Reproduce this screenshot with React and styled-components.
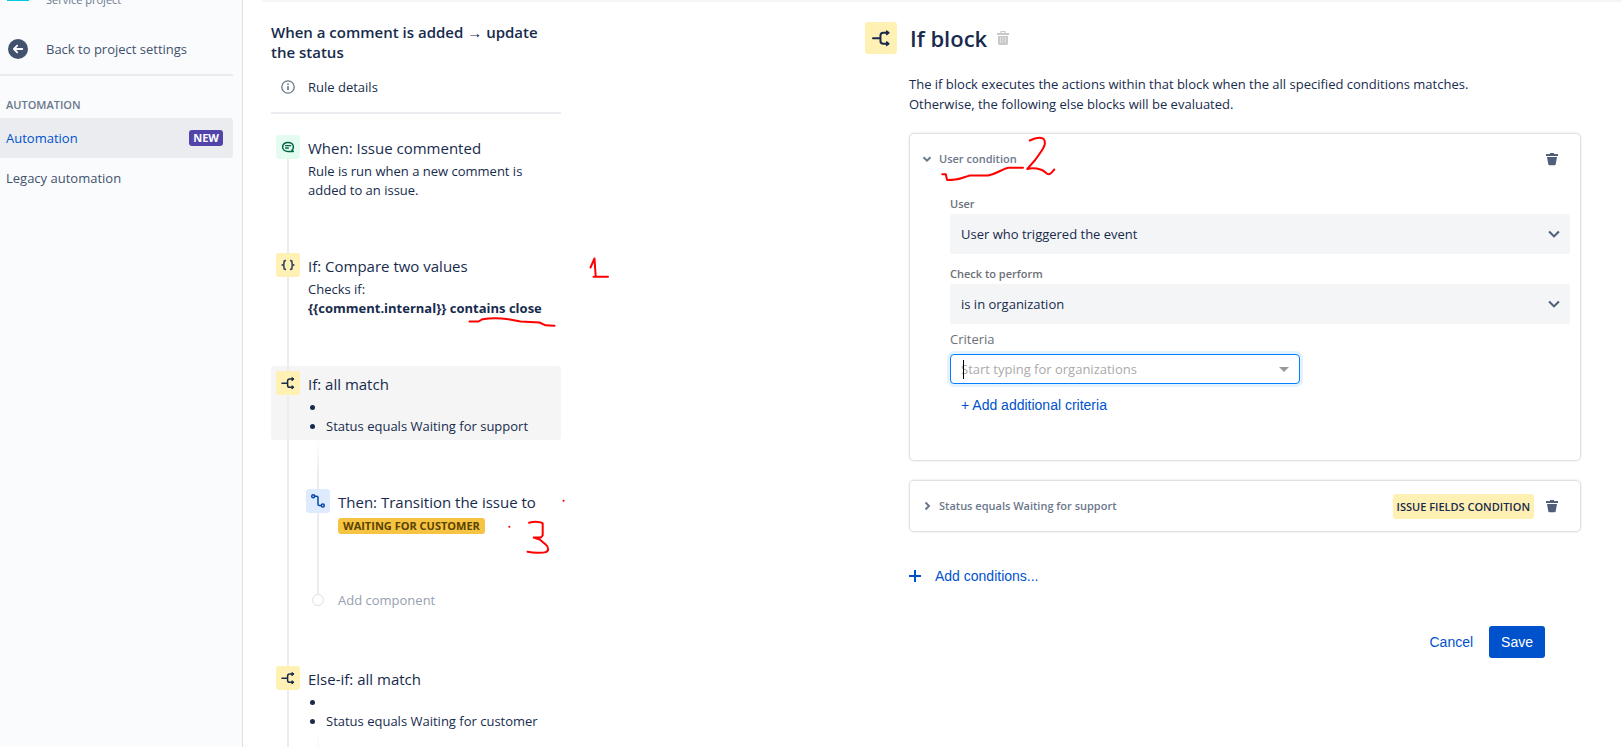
import styled, { createGlobalStyle } from 'styled-components';

const GlobalStyle = createGlobalStyle`
  *, *::before, *::after {
    box-sizing: border-box;
  }
  body {
    margin: 0;
    color: #172b4d;
    background: #fff;
    font-family: "Open Sans", "Noto Sans", sans-serif;
    font-size: 13px;
    line-height: 20px;
  }
  h1, h2, h3, p, ul {
    margin: 0;
    padding: 0;
  }
  button, input, select {
    font: inherit;
    color: inherit;
  }
`;

const Page = styled.div`
  position: relative;
  display: flex;
  height: 100vh;
  overflow: hidden;
`;

/* ---------- sidebar ---------- */

const Sidebar = styled.nav`
  flex: none;
  width: 243px;
  padding-right: 9px;
  background: #fafbfc;
  border-right: 1px solid #dfe1e6;
  color: #42526e;
`;

const ProjectHeader = styled.div`
  display: flex;
  align-items: flex-end;
  gap: 17px;
  height: 10px;
  margin-top: -2px;
  padding-left: 7px;
  font-size: 11px;
  line-height: 16px;
  color: #6b778c;
`;

const ProjectAvatar = styled.span`
  align-self: flex-start;
  width: 22px;
  height: 3px;
  background: #00c7e5;
`;

const BackLink = styled.a`
  display: flex;
  align-items: center;
  gap: 18px;
  height: 68px;
  padding: 16px 0 0 8px;
  border-bottom: 2px solid #ebecf0;
  color: inherit;
  text-decoration: none;
`;

const NavHeading = styled.h3`
  padding: 20px 6px 4px;
  font-size: 11px;
  line-height: 18px;
  font-weight: 600;
  color: #6b778c;
`;

const NavItem = styled.a`
  display: flex;
  align-items: center;
  justify-content: space-between;
  height: 40px;
  padding: 0 10px 0 6px;
  border-radius: 0 3px 3px 0;
  background: ${(props) => (props.$active ? '#ebecf0' : 'transparent')};
  color: ${(props) => (props.$active ? '#0052cc' : 'inherit')};
  text-decoration: none;
`;

const NewBadge = styled.span`
  padding: 0 4px;
  border-radius: 3px;
  background: #5243aa;
  color: #fff;
  font-size: 11px;
  line-height: 16px;
  font-weight: 700;
`;

/* ---------- main ---------- */

const Main = styled.main`
  flex: 1;
  min-width: 0;
  padding-left: 19px;
`;

const TopStrip = styled.div`
  height: 2px;
  border-radius: 0 0 0 3px;
  background: #f4f5f7;
`;

const Editor = styled.div`
  display: grid;
  grid-template-columns: 290px minmax(0, 716px);
  justify-content: space-between;
  gap: 40px;
  padding: 20px 40px 0 9px;
`;

const RuleTitle = styled.h2`
  font-size: 15px;
  line-height: 20px;
  font-weight: 600;
`;

const RuleDetails = styled.a`
  display: flex;
  align-items: center;
  gap: 12px;
  height: 52px;
  padding: 0 9px;
  border-bottom: 2px solid #ebecf0;
  color: inherit;
  text-decoration: none;
`;

const Timeline = styled.div`
  position: relative;
  margin-top: 16px;

  &::before {
    content: "";
    position: absolute;
    top: 29px;
    bottom: 0;
    left: 16px;
    width: 2px;
    background: #ebecf0;
  }
`;

const Step = styled.section`
  display: flex;
  gap: 8px;
  margin-bottom: ${(props) => (props.$open ? 0 : '44px')};
  padding: 5px 5px 4px;
  border-radius: 3px;
  /* translucent, the timeline shows through the selected step */
  background: ${(props) => (props.$selected ? 'rgba(9, 9, 9, 0.04)' : 'transparent')};
`;

const Tile = styled.span`
  position: relative;
  flex: none;
  display: flex;
  align-items: center;
  justify-content: center;
  width: ${(props) => props.$size || 24}px;
  height: ${(props) => props.$size || 24}px;
  border-radius: 3px;
  background: ${(props) => props.$bg};
  color: ${(props) => props.$color || '#172b4d'};
`;

const StepBody = styled.div`
  min-width: 0;
  padding-top: 1px;
  line-height: 19px;
`;

const StepTitle = styled.h3`
  margin-bottom: 2px;
  font-size: 15px;
  line-height: 24px;
  font-weight: 400;
  white-space: nowrap;
`;

const Bullets = styled.ul`
  padding-left: 18px;

  li {
    min-height: 19px;
  }
`;

const Branch = styled.div`
  position: relative;
  min-height: 60px;
  margin-left: 30px;
  padding-top: 44px;

  &::before {
    content: "";
    position: absolute;
    top: 0;
    bottom: 23px;
    left: 16px;
    width: 2px;
    background: linear-gradient(#fff, #ebecf0 32px);
  }

  &:empty::before {
    bottom: 0;
  }
`;

const StatusLozenge = styled.span`
  display: inline-block;
  padding: 0 5px;
  border-radius: 3px;
  background: #f6c342;
  color: #594300;
  font-size: 11px;
  line-height: 16px;
  font-weight: 700;
`;

const AddComponent = styled.button`
  display: flex;
  align-items: center;
  gap: 14px;
  height: 34px;
  margin-bottom: 44px;
  padding: 0 11px;
  border: 0;
  background: none;
  color: #97a0af;
`;

const AddDot = styled.span`
  position: relative;
  width: 12px;
  height: 12px;
  border: 1px solid #dfe1e6;
  border-radius: 50%;
  background: #fff;
`;

/* ---------- block settings ---------- */

const BlockHeader = styled.header`
  display: flex;
  align-items: center;
  gap: 10px;
`;

const BlockTitle = styled.h1`
  padding-left: 3px;
  font-size: 22px;
  line-height: 32px;
  font-weight: 600;
`;

const IconButton = styled.button`
  display: flex;
  padding: 0;
  border: 0;
  background: none;
  color: ${(props) => props.$color || '#505f79'};
`;

const BlockContent = styled.div`
  padding: 20px 0 0 44px;
`;

const Description = styled.p`
  max-width: 600px;
`;

const Card = styled.section`
  margin-top: 19px;
  padding: 0 10px;
  border: 1px solid #dfe1e6;
  border-radius: 5px;
  box-shadow: 0 0 2px rgba(0, 0, 0, 0.15);
`;

const CardHeader = styled.div`
  display: flex;
  align-items: center;
  gap: 12px;
  height: 50px;
  padding: 0 12px 0 2px;
`;

const CardToggle = styled.button`
  display: flex;
  align-items: center;
  gap: 7px;
  margin-right: auto;
  padding: 0;
  border: 0;
  background: none;
  color: #6b778c;
  font-size: 11px;
  font-weight: 600;
`;

const FieldsBadge = styled.span`
  padding: 0 4px;
  border-radius: 3px;
  background: #fff0b3;
  font-size: 11px;
  line-height: 25px;
  font-weight: 600;
`;

const Fields = styled.div`
  padding: 10px 0 45px 30px;
`;

const Label = styled.label`
  display: block;
  font-size: ${(props) => (props.$large ? 13 : 11)}px;
  line-height: ${(props) => (props.$large ? 30 : 20)}px;
  font-weight: ${(props) => (props.$large ? 400 : 600)};
  color: #6c7077;
`;

const SelectWrap = styled.div`
  position: relative;
  margin-bottom: ${(props) => props.$gap || 0}px;

  svg {
    position: absolute;
    top: 13px;
    right: 9px;
    pointer-events: none;
  }
`;

const Select = styled.select`
  display: block;
  width: 100%;
  height: 40px;
  padding: 0 32px 0 11px;
  border: 0;
  border-radius: 3px;
  background: #f4f5f7;
  appearance: none;
`;

const Combo = styled.div`
  position: relative;
  max-width: 350px;
`;

const ComboInput = styled.input`
  display: block;
  width: 100%;
  height: 30px;
  padding: 0 32px 0 10px;
  border: 1px solid #007eff;
  border-radius: 4px;
  box-shadow: 0 0 0 3px rgba(0, 126, 255, 0.1);
  outline: 0;

  &::placeholder {
    color: #aaa;
    opacity: 1;
  }
`;

const ComboCaret = styled.span`
  position: absolute;
  top: 6px;
  left: 13px;
  width: 1px;
  height: 19px;
  background: #000;
`;

const ComboArrow = styled.span`
  position: absolute;
  top: 13px;
  right: 11px;
  border: 5px solid transparent;
  border-top-color: #999;
  border-bottom-width: 0;
`;

const TextButton = styled.button`
  display: flex;
  align-items: center;
  gap: 14px;
  padding: ${(props) => props.$padding || 0};
  border: 0;
  background: none;
  color: #0052cc;
  font-family: "Liberation Sans", Arial, sans-serif;
  font-size: 14px;
  line-height: 20px;
`;

const Actions = styled.div`
  display: flex;
  justify-content: flex-end;
  gap: 16px;
  margin-top: 40px;
  padding-right: 36px;
`;

const SaveButton = styled.button`
  height: 32px;
  padding: 0 12px;
  border: 0;
  border-radius: 3px;
  background: #0052cc;
  color: #fff;
  font-family: "Liberation Sans", Arial, sans-serif;
  font-size: 14px;
`;

const Markup = styled.svg`
  position: absolute;
  top: 0;
  left: 0;
  pointer-events: none;
`;

/* ---------- icons ---------- */

const BackIcon = () => (
  <svg width="20" height="20" viewBox="0 0 20 20" fill="none">
    <circle cx="10" cy="10" r="10" fill="#42526e" />
    <path d="M14.3 10H6M9.2 6.7L5.9 10l3.3 3.3" stroke="#fff" strokeWidth="1.8" strokeLinecap="round" strokeLinejoin="round" />
  </svg>
);

const InfoIcon = () => (
  <svg width="16" height="16" viewBox="0 0 16 16" fill="none">
    <circle cx="8" cy="8" r="6.2" stroke="#6b778c" strokeWidth="1.3" />
    <path d="M8 7.3v3.7" stroke="#6b778c" strokeWidth="1.7" />
    <circle cx="8" cy="5.2" r="0.9" fill="#6b778c" />
  </svg>
);

const CommentIcon = () => (
  <svg width="24" height="24" viewBox="0 0 24 24" fill="none" stroke="currentColor" strokeWidth="1.5" strokeLinecap="round" strokeLinejoin="round">
    <path d="M16 15.2c.9-.9 1.4-2 1.4-3.3 0-2.6-2.4-4.5-5.4-4.5s-5.4 1.9-5.4 4.5 2.4 4.5 5.4 4.5h5.2z" />
    <path d="M9.6 10.7h5M9.6 13h2.8" strokeWidth="1.3" />
  </svg>
);

const BracesIcon = () => (
  <svg width="24" height="24" viewBox="0 0 24 24" fill="none" stroke="#344563" strokeWidth="1.6" strokeLinejoin="round">
    <path d="M10 7.6h-.8c-.8 0-1.2.4-1.2 1.2v1.8c0 .8-.5 1.4-1.9 1.4 1.4 0 1.9.6 1.9 1.4v1.8c0 .8.4 1.2 1.2 1.2h.8" />
    <path d="M14 7.6h.8c.8 0 1.2.4 1.2 1.2v1.8c0 .8.5 1.4 1.9 1.4-1.4 0-1.9.6-1.9 1.4v1.8c0 .8-.4 1.2-1.2 1.2H14" />
  </svg>
);

const SplitIcon = ({ size = 24 }) => (
  <svg width={size} height={size} viewBox="0 0 24 24" fill="none" stroke="currentColor" strokeWidth="1.5" strokeLinecap="round" strokeLinejoin="round">
    <path d="M6 12.2h5.6M17.4 8.1h-3.7a2.1 2.1 0 0 0-2.1 2.1v4a2.1 2.1 0 0 0 2.1 2.1h3.7" />
    <path d="M16.2 6.7l1.7 1.4-1.7 1.4zM16.2 14.9l1.7 1.4-1.7 1.4z" fill="currentColor" strokeWidth="1" />
  </svg>
);

const PathIcon = () => (
  <svg width="24" height="24" viewBox="0 0 24 24" fill="none" stroke="currentColor" strokeWidth="1.5">
    <circle cx="7.2" cy="7.2" r="1.5" />
    <circle cx="16.8" cy="16.6" r="1.5" />
    <path d="M8.7 7.2h1.9q1.4 0 1.4 1.4v6.6q0 1.4 1.4 1.4h1.9" />
  </svg>
);

const TrashIcon = () => (
  <svg width="12" height="13" viewBox="0 0 12 13" fill="currentColor">
    <path d="M4 0h4v1h3.5q.5 0 .5.5V3H0V1.500Q0 1 .5 1H4zM1 4h10l-1.300 7.300q-.2 1-1.200 1h-5q-1 0-1.200-1z" />
  </svg>
);

const TrashOutlineIcon = () => (
  <svg width="12" height="14" viewBox="0 0 12 14">
    <path d="M4 0h4q.6 0 .6.6V2H12v2H0V2h3.400V.6Q3.400 0 4 0zm.6 1.100V2h2.800v-.9zM1 5h10v7.600q0 1.400-1.400 1.400H2.400Q1 14 1 12.600z" fill="currentColor" fillRule="evenodd" />
    <path d="M3.500 6v6M6 6v6M8.500 6v6" stroke="#e6e6e6" strokeWidth="0.8" />
  </svg>
);

const ChevronIcon = ({ size = 10, direction = 'down', color = '#6b778c' }) => (
  <svg width={size} height={size} viewBox="0 0 10 10" fill="none" stroke={color} strokeWidth={size > 10 ? 1.5 : 2}>
    <path d={direction === 'down' ? 'M1.500 3.200L5 6.700l3.500-3.500' : 'M3.500 1.500L7 5 3.500 8.500'} />
  </svg>
);

const PlusIcon = () => (
  <svg width="12" height="12" viewBox="0 0 12 12" stroke="currentColor" strokeWidth="2">
    <path d="M6 0v12M0 6h12" />
  </svg>
);

export default function App() {
  return (
    <Page>
      <GlobalStyle />
      <Sidebar>
        <ProjectHeader>
          <ProjectAvatar />
          Service project
        </ProjectHeader>
        <BackLink href="#settings">
          <BackIcon />
          Back to project settings
        </BackLink>
        <NavHeading>AUTOMATION</NavHeading>
        <NavItem href="#automation" $active>
          Automation
          <NewBadge>NEW</NewBadge>
        </NavItem>
        <NavItem href="#legacy">Legacy automation</NavItem>
      </Sidebar>

      <Main>
        <TopStrip />
        <Editor>
          <div>
            <RuleTitle>When a comment is added → update the status</RuleTitle>
            <RuleDetails href="#details">
              <InfoIcon />
              Rule details
            </RuleDetails>

            <Timeline>
              <Step>
                <Tile $bg="#e3fcef" $color="#006644"><CommentIcon /></Tile>
                <StepBody>
                  <StepTitle>When: Issue commented</StepTitle>
                  <p>Rule is run when a new comment is added to an issue.</p>
                </StepBody>
              </Step>

              <Step>
                <Tile $bg="#fff0b3"><BracesIcon /></Tile>
                <StepBody>
                  <StepTitle>If: Compare two values</StepTitle>
                  <p>Checks if:</p>
                  <p><b>{'{{comment.internal}} contains close'}</b></p>
                </StepBody>
              </Step>

              <Step $selected $open>
                <Tile $bg="#fff0b3"><SplitIcon /></Tile>
                <StepBody>
                  <StepTitle>If: all match</StepTitle>
                  <Bullets>
                    <li />
                    <li>Status equals Waiting for support</li>
                  </Bullets>
                </StepBody>
              </Step>
              <Branch>
                <Step>
                  <Tile $bg="#deebff" $color="#0747a6"><PathIcon /></Tile>
                  <StepBody>
                    <StepTitle>Then: Transition the issue to</StepTitle>
                    <StatusLozenge>WAITING FOR CUSTOMER</StatusLozenge>
                  </StepBody>
                </Step>
                <AddComponent type="button">
                  <AddDot />
                  Add component
                </AddComponent>
              </Branch>

              <Step $open>
                <Tile $bg="#fff0b3"><SplitIcon /></Tile>
                <StepBody>
                  <StepTitle>Else-if: all match</StepTitle>
                  <Bullets>
                    <li />
                    <li>Status equals Waiting for customer</li>
                  </Bullets>
                </StepBody>
              </Step>
              <Branch />
            </Timeline>
          </div>

          <div>
            <BlockHeader>
              <Tile $bg="#fff0b3" $size={32}><SplitIcon size={32} /></Tile>
              <BlockTitle>If block</BlockTitle>
              <IconButton type="button" aria-label="Delete block" $color="#c8c8c8">
                <TrashOutlineIcon />
              </IconButton>
            </BlockHeader>

            <BlockContent>
              <Description>
                The if block executes the actions within that block when the all specified conditions matches.
                Otherwise, the following else blocks will be evaluated.
              </Description>

              <Card>
                <CardHeader>
                  <CardToggle type="button">
                    <ChevronIcon />
                    User condition
                  </CardToggle>
                  <IconButton type="button" aria-label="Delete condition">
                    <TrashIcon />
                  </IconButton>
                </CardHeader>
                <Fields>
                  <Label htmlFor="user">User</Label>
                  <SelectWrap $gap={10}>
                    <Select id="user">
                      <option>User who triggered the event</option>
                    </Select>
                    <ChevronIcon size={14} color="#505f79" />
                  </SelectWrap>
                  <Label htmlFor="check">Check to perform</Label>
                  <SelectWrap>
                    <Select id="check">
                      <option>is in organization</option>
                    </Select>
                    <ChevronIcon size={14} color="#505f79" />
                  </SelectWrap>
                  <Label htmlFor="criteria" $large>Criteria</Label>
                  <Combo>
                    <ComboInput id="criteria" placeholder="Start typing for organizations" />
                    <ComboCaret />
                    <ComboArrow />
                  </Combo>
                  <TextButton type="button" $padding="11px 11px 0">+ Add additional criteria</TextButton>
                </Fields>
              </Card>

              <Card>
                <CardHeader>
                  <CardToggle type="button">
                    <ChevronIcon direction="right" />
                    Status equals Waiting for support
                  </CardToggle>
                  <FieldsBadge>ISSUE FIELDS CONDITION</FieldsBadge>
                  <IconButton type="button" aria-label="Delete condition">
                    <TrashIcon />
                  </IconButton>
                </CardHeader>
              </Card>

              <TextButton type="button" $padding="34px 0 0">
                <PlusIcon />
                Add conditions...
              </TextButton>

              <Actions>
                <TextButton type="button">Cancel</TextButton>
                <SaveButton type="button">Save</SaveButton>
              </Actions>
            </BlockContent>
          </div>
        </Editor>
      </Main>

      <Markup width="1621" height="747" viewBox="0 0 1621 747" fill="none" stroke="#fe0000" strokeWidth="2" strokeLinecap="round" strokeLinejoin="round" aria-hidden="true">
        <path d="M469.500 321.500h9l4-2.300c8-1.300 17-1.200 26 0l12 2.300 19 1 6 2.800 9 .4" />
        <path d="M590.500 267.500l4-9 1.200 18M593.500 276.700H608" />
        <path d="M942.300 174.300h3.500l1.300 5.700q9 0 15-2t8-2.500h18q5-1 12-4.500t9-3.300H1023" />
        <path d="M1029.700 140.500c5-2.500 11-3.500 14-1.500 2 2.500 1 7-1.500 11s-10 14-15 19c6-1.500 10-.5 14 .7s5 4.600 7.500 4.600c2 0 4-3 5.600-4.800" />
        <path d="M529 522.700c5-1.200 12-1.200 13.700.7v12l-2 2.200h-7l6 2 6 5c3.500 3 3 6.500 0 7.500s-12 .8-18.200-.4" />
        <path d="M563.500 500.700h.1M509.300 526.700h.1" />
      </Markup>
    </Page>
  );
}
